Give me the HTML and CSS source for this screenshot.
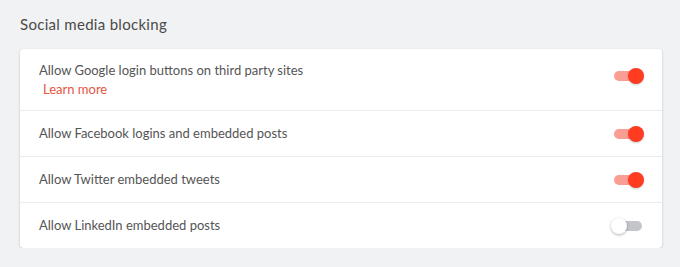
FILE: index.html
```html
<!DOCTYPE html>
<html lang="en">
<head>
  <meta charset="UTF-8">
  <title>Social media blocking</title>
  <link rel="stylesheet" href="styles.css">
</head>
<body>
  <div class="section">
    <h2>Social media blocking</h2>
    <div class="card">
      <div class="row tall">
        <div class="label">
          <div>Allow Google login buttons on third party sites</div>
          <a href="#" class="learn">Learn more</a>
        </div>
        <div class="toggle on"><span class="knob"></span></div>
      </div>
      <div class="row">
        <div class="label">Allow Facebook logins and embedded posts</div>
        <div class="toggle on"><span class="knob"></span></div>
      </div>
      <div class="row">
        <div class="label">Allow Twitter embedded tweets</div>
        <div class="toggle on"><span class="knob"></span></div>
      </div>
      <div class="row">
        <div class="label">Allow LinkedIn embedded posts</div>
        <div class="toggle"><span class="knob"></span></div>
      </div>
    </div>
  </div>
</body>
</html>
```

FILE: styles.css
```css
body {
  margin: 0;
  background: #f1f2f4;
  font-family: Lato, "Open Sans", sans-serif;
  color: #555;
}
.section {
  padding: 14px 18px 0 20px;
}
h2 {
  margin: 0 0 15px 0;
  font-size: 15px;
  font-weight: 400;
  color: #4a4a4a;
  line-height: 20px;
  letter-spacing: 0.3px;
}
.card {
  background: #fff;
  border-radius: 4px;
  box-shadow: 0 1px 3px rgba(0, 0, 0, 0.18);
}
.row {
  display: flex;
  align-items: center;
  justify-content: space-between;
  box-sizing: border-box;
  height: 46px;
  padding: 0 20px 0 19px;
  border-top: 1px solid #ececee;
  font-size: 13px;
}
.row:first-child {
  border-top: none;
}
.row.tall {
  height: 61px;
  align-items: flex-start;
  padding-top: 13px;
}
.row.tall .toggle {
  margin-top: 9px;
}
.label {
  line-height: 17px;
}
.learn {
  display: inline-block;
  margin: 2px 0 0 4px;
  color: #e5553f;
  text-decoration: none;
}
.toggle {
  position: relative;
  width: 28px;
  height: 10px;
  border-radius: 5px;
  background: #c3c5cb;
}
.toggle .knob {
  position: absolute;
  top: -3px;
  left: -3px;
  width: 16px;
  height: 16px;
  border-radius: 50%;
  background: #fff;
  box-shadow: 0 1px 3px rgba(0, 0, 0, 0.3);
}
.toggle.on {
  background: #fa9d92;
}
.toggle.on .knob {
  left: auto;
  right: -2px;
  background: #ff3b22;
  box-shadow: 0 1px 2px rgba(0, 0, 0, 0.2);
}
```
